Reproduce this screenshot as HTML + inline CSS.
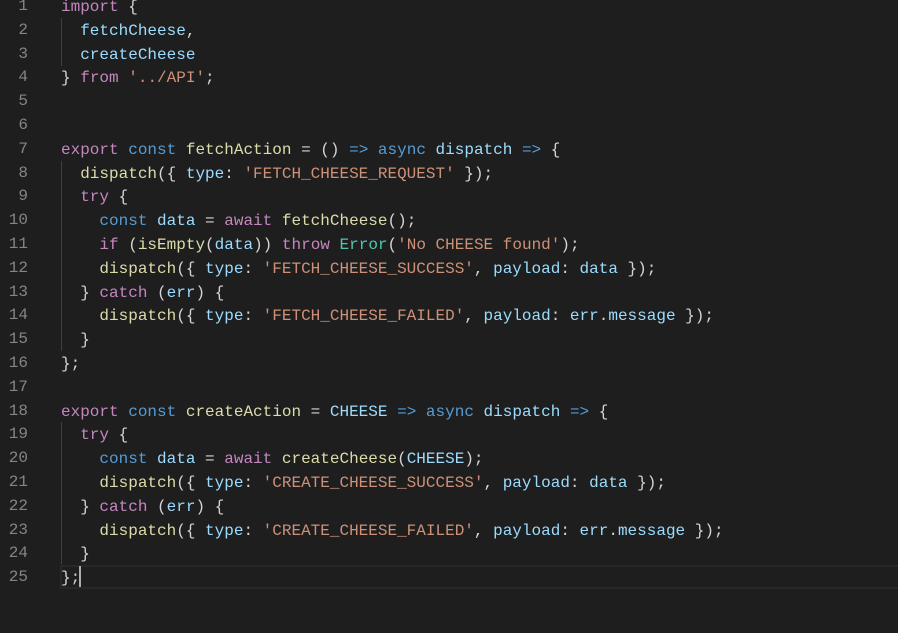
<!DOCTYPE html>
<html><head><meta charset="utf-8"><style>
html,body{margin:0;padding:0;background:#1e1e1e;width:898px;height:633px;overflow:hidden;}
.ed{position:relative;width:898px;height:633px;font-family:"Liberation Mono",monospace;font-size:16px;}
.ln{position:absolute;left:0;top:-5px;width:28px;text-align:right;color:#858585;line-height:23.79px;white-space:pre;}
.code{position:absolute;left:61px;top:-4px;margin:0;color:#d4d4d4;white-space:pre;font-family:"Liberation Mono",monospace;font-size:16px;line-height:23.79px;}
.k{color:#c586c0}.b{color:#569cd6}.f{color:#dcdcaa}.v{color:#9cdcfe}.s{color:#ce9178}.t{color:#4ec9b0}
.y,.p,.c{color:#d4d4d4}
.g{position:absolute;left:61px;width:1px;background:#404040;}
.cur{position:absolute;left:60px;right:0;top:565px;height:20px;border:2px solid #282828;border-right:none;}
.caret{position:absolute;left:79px;top:566px;width:2px;height:21px;background:#aeafad;}
</style></head><body><div class="ed">
<div class="cur"></div>
<div class="g" style="top:18px;height:48px"></div>
<div class="g" style="top:161px;height:190px"></div>
<div class="g" style="top:422px;height:142px"></div>
<div class="ln">1
2
3
4
5
6
7
8
9
10
11
12
13
14
15
16
17
18
19
20
21
22
23
24
25</div>
<pre class="code"><span class="k">import</span> <span class="y">{</span>
  <span class="v">fetchCheese</span>,
  <span class="v">createCheese</span>
<span class="y">}</span> <span class="k">from</span> <span class="s">'../API'</span>;


<span class="k">export</span> <span class="b">const</span> <span class="f">fetchAction</span> = <span class="y">()</span> <span class="b">=&gt;</span> <span class="b">async</span> <span class="v">dispatch</span> <span class="b">=&gt;</span> <span class="y">{</span>
  <span class="f">dispatch</span><span class="p">(</span><span class="c">{</span> <span class="v">type</span>: <span class="s">'FETCH_CHEESE_REQUEST'</span> <span class="c">}</span><span class="p">)</span>;
  <span class="k">try</span> <span class="p">{</span>
    <span class="b">const</span> <span class="v">data</span> = <span class="k">await</span> <span class="f">fetchCheese</span><span class="c">()</span>;
    <span class="k">if</span> <span class="c">(</span><span class="f">isEmpty</span><span class="y">(</span><span class="v">data</span><span class="y">)</span><span class="c">)</span> <span class="k">throw</span> <span class="t">Error</span><span class="c">(</span><span class="s">'No CHEESE found'</span><span class="c">)</span>;
    <span class="f">dispatch</span><span class="c">(</span><span class="y">{</span> <span class="v">type</span>: <span class="s">'FETCH_CHEESE_SUCCESS'</span>, <span class="v">payload</span>: <span class="v">data</span> <span class="y">}</span><span class="c">)</span>;
  <span class="p">}</span> <span class="k">catch</span> <span class="p">(</span><span class="v">err</span><span class="p">)</span> <span class="p">{</span>
    <span class="f">dispatch</span><span class="c">(</span><span class="y">{</span> <span class="v">type</span>: <span class="s">'FETCH_CHEESE_FAILED'</span>, <span class="v">payload</span>: <span class="v">err</span>.<span class="v">message</span> <span class="y">}</span><span class="c">)</span>;
  <span class="p">}</span>
<span class="y">}</span>;

<span class="k">export</span> <span class="b">const</span> <span class="f">createAction</span> = <span class="v">CHEESE</span> <span class="b">=&gt;</span> <span class="b">async</span> <span class="v">dispatch</span> <span class="b">=&gt;</span> <span class="y">{</span>
  <span class="k">try</span> <span class="p">{</span>
    <span class="b">const</span> <span class="v">data</span> = <span class="k">await</span> <span class="f">createCheese</span><span class="c">(</span><span class="v">CHEESE</span><span class="c">)</span>;
    <span class="f">dispatch</span><span class="c">(</span><span class="y">{</span> <span class="v">type</span>: <span class="s">'CREATE_CHEESE_SUCCESS'</span>, <span class="v">payload</span>: <span class="v">data</span> <span class="y">}</span><span class="c">)</span>;
  <span class="p">}</span> <span class="k">catch</span> <span class="p">(</span><span class="v">err</span><span class="p">)</span> <span class="p">{</span>
    <span class="f">dispatch</span><span class="c">(</span><span class="y">{</span> <span class="v">type</span>: <span class="s">'CREATE_CHEESE_FAILED'</span>, <span class="v">payload</span>: <span class="v">err</span>.<span class="v">message</span> <span class="y">}</span><span class="c">)</span>;
  <span class="p">}</span>
<span class="y">}</span>;</pre>
<div class="caret"></div>
</div></body></html>
